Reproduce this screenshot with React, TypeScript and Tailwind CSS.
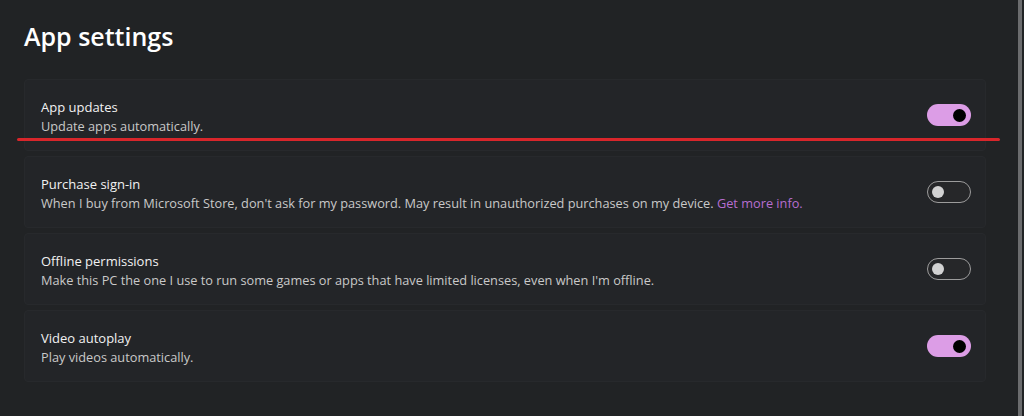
import React from "react"

type Row = {
  title: string
  desc: string
  link?: string
  on: boolean
}

const rows: Row[] = [
  { title: "App updates", desc: "Update apps automatically.", on: true },
  {
    title: "Purchase sign-in",
    desc: "When I buy from Microsoft Store, don't ask for my password. May result in unauthorized purchases on my device.",
    link: "Get more info.",
    on: false,
  },
  {
    title: "Offline permissions",
    desc: "Make this PC the one I use to run some games or apps that have limited licenses, even when I'm offline.",
    on: false,
  },
  { title: "Video autoplay", desc: "Play videos automatically.", on: true },
]

function Toggle({ on }: { on: boolean }) {
  return on ? (
    <div className="flex h-[22px] w-[44px] items-center justify-end rounded-full bg-[#dc9de6] pr-[5px]">
      <div className="h-[13px] w-[13px] rounded-full bg-black" />
    </div>
  ) : (
    <div className="flex h-[22px] w-[44px] items-center rounded-full border border-[#9c9c9c] bg-[#262729] pl-[4px]">
      <div className="h-[12px] w-[12px] rounded-full bg-[#d2d2d2]" />
    </div>
  )
}

export default function App() {
  return (
    <div
      className="relative flex h-[416px] w-[1024px] overflow-hidden bg-[#212325]"
      style={{ fontFamily: '"Open Sans", "Noto Sans", sans-serif' }}
    >
      <div className="flex-1 pl-[24px] pr-[32px]">
        <h1 className="pt-[19px] text-[25px] font-semibold leading-[34px] text-white">App settings</h1>

        <div className="mt-[26px] flex flex-col gap-[5px]">
          {rows.map((r) => (
            <div
              key={r.title}
              className="flex h-[72px] items-center justify-between rounded-[4px] border border-[#27292c] bg-[#232528] pl-[16px] pr-[14px]"
            >
              <div className="flex flex-col pt-[3px]">
                <span className="text-[13px] leading-[19px] text-[#f2f2f2]">{r.title}</span>
                <span className="text-[12.75px] leading-[18px] text-[#c9c9c9]">
                  {r.desc}
                  {r.link && <span className="text-[#b76ed0]"> {r.link}</span>}
                </span>
              </div>
              <Toggle on={r.on} />
            </div>
          ))}
        </div>
      </div>

      {/* scrollbar edge */}
      <div className="mr-[2px] w-[4px] bg-[#6b6c6e]" />

      {/* red annotation underline */}
      <div className="absolute left-[17px] top-[138px] h-[3px] w-[983px] rounded-full bg-[#d8262b]" />
    </div>
  )
}
